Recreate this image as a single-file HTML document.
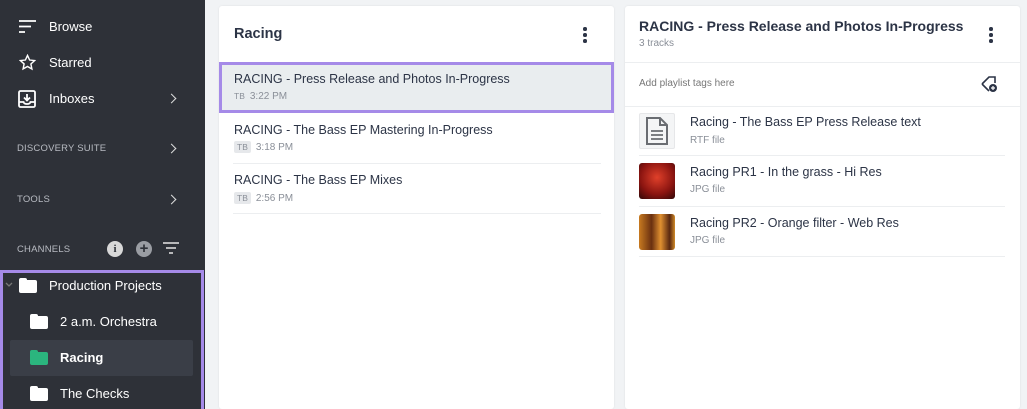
<!DOCTYPE html><html><head><style>
*{box-sizing:border-box;margin:0;padding:0}
body{width:1027px;height:409px;overflow:hidden;background:#f1f3f5;font-family:"Liberation Sans",sans-serif;position:relative}
.sb{position:absolute;left:0;top:0;width:205px;height:409px;background:#2e3138;color:#fff}
.a{position:absolute}
.nav{font-size:13px;color:#fff}
.sec{font-size:9.5px;color:#b8bbc2;letter-spacing:.2px}
.chev{position:absolute;width:7px;height:7px;border-top:1.6px solid #ddd;border-right:1.6px solid #ddd;transform:rotate(45deg)}
.panel{position:absolute;background:#fff;top:6px;height:403px;border-radius:3px;box-shadow:0 0 2px rgba(0,0,0,.08)}
.t{font-size:12.5px;color:#2c3446}
.s{font-size:10px;color:#8a8f98}
.tb{display:inline-block;background:#e6e8eb;color:#8a8f98;font-size:8.5px;padding:1px 3px;border-radius:2px;margin-right:5px}
.hr{position:absolute;height:1px;background:#eceef0}
.dots{position:absolute;width:3px}
.dots i{display:block;width:3.5px;height:3.5px;border-radius:50%;background:#2c3446;margin-bottom:2.5px}
.folder{position:absolute;width:18px;height:13px;background:#fff;border-radius:2px}
.folder:before{content:"";position:absolute;left:0;top:-2px;width:8px;height:4px;background:inherit;border-radius:2px 2px 0 0}
</style></head><body>
<div class="sb">
<svg class="a" style="left:19px;top:20px" width="18" height="14"><path d="M0 1h17M0 6.5h12M0 12h6" stroke="#fff" stroke-width="1.8"/></svg>
<div class="a nav" style="left:49px;top:19px">Browse</div>
<svg class="a" style="left:19px;top:54px" width="17" height="17" viewBox="0 0 24 24"><path d="M12 2l3 6.5 7 .8-5.2 4.8 1.4 7L12 17.6 5.8 21l1.4-7L2 9.3l7-.8z" fill="none" stroke="#fff" stroke-width="2"/></svg>
<div class="a nav" style="left:49px;top:55px">Starred</div>
<svg class="a" style="left:18px;top:90px" width="18" height="18"><rect x="1" y="1" width="16" height="16" rx="1.5" fill="none" stroke="#fff" stroke-width="1.8"/><path d="M9 4v6M6 7.5l3 3 3-3M1 12h4.5a3.5 2 0 0 0 7 0H17" fill="none" stroke="#fff" stroke-width="1.8"/></svg>
<div class="a nav" style="left:49px;top:91px">Inboxes</div>
<div class="chev" style="left:168px;top:95px"></div>
<div class="a sec" style="left:17px;top:143px">DISCOVERY SUITE</div>
<div class="chev" style="left:168px;top:145px"></div>
<div class="a sec" style="left:17px;top:194px">TOOLS</div>
<div class="chev" style="left:168px;top:196px"></div>
<div class="a sec" style="left:17px;top:244px">CHANNELS</div>
<div class="a" style="left:107px;top:241px;width:16px;height:16px;border-radius:50%;background:#d8d8d8;color:#2e3138;font:bold 11px 'Liberation Serif',serif;text-align:center;line-height:16px">i</div>
<div class="a" style="left:136px;top:241px;width:16px;height:16px;border-radius:50%;background:#9a9da3;color:#2e3138;font:bold 15px sans-serif;text-align:center;line-height:16px">+</div>
<svg class="a" style="left:163px;top:242px" width="16" height="13"><path d="M0 1h16M3 6h10M6 11h4" stroke="#ccc" stroke-width="1.8"/></svg>
<div class="a" style="left:0;top:270px;width:204px;height:139px;border:3px solid #a58ae8;border-bottom:none"></div>
<svg class="a" style="left:5px;top:282px" width="8" height="6"><path d="M1 1l3 3 3-3" fill="none" stroke="#777" stroke-width="1.3"/></svg>
<div class="folder" style="left:19px;top:280px"></div>
<div class="a nav" style="left:49px;top:278px">Production Projects</div>
<div class="folder" style="left:30px;top:316px"></div>
<div class="a nav" style="left:60px;top:314px">2 a.m. Orchestra</div>
<div class="a" style="left:10px;top:340px;width:183px;height:36px;background:#3a3e47;border-radius:2px"></div>
<div class="folder" style="left:30px;top:352px;background:#2bb57e"></div>
<div class="a nav" style="left:60px;top:350px;font-weight:bold">Racing</div>
<div class="folder" style="left:30px;top:388px"></div>
<div class="a nav" style="left:60px;top:386px">The Checks</div>
</div>

<div class="panel" style="left:219px;width:395px">
<div class="a" style="left:15px;top:20px;font-size:14.5px;font-weight:bold;color:#2c3446">Racing</div>
<div class="dots" style="left:364px;top:21px"><i></i><i></i><i></i></div>
<div class="a" style="left:0;top:56px;width:395px;height:51px;background:#e9edef;border:3px solid #a58ae8"></div>
<div class="a t" style="left:15px;top:66px">RACING - Press Release and Photos In-Progress</div>
<div class="a s" style="left:15px;top:85px"><span class="tb" style="background:none;padding:0">TB</span>3:22 PM</div>
<div class="a t" style="left:15px;top:117px">RACING - The Bass EP Mastering In-Progress</div>
<div class="a s" style="left:15px;top:135px"><span class="tb">TB</span>3:18 PM</div>
<div class="hr" style="left:14px;width:368px;top:157px"></div>
<div class="a t" style="left:15px;top:167px">RACING - The Bass EP Mixes</div>
<div class="a s" style="left:15px;top:186px"><span class="tb">TB</span>2:56 PM</div>
<div class="hr" style="left:14px;width:368px;top:207px"></div>
</div>

<div class="panel" style="left:625px;width:395px">
<div class="a" style="left:14px;top:12px;font-size:14px;font-weight:bold;color:#2c3446">RACING - Press Release and Photos In-Progress</div>
<div class="a s" style="left:14px;top:32px;font-size:10px">3 tracks</div>
<div class="dots" style="left:364px;top:21px"><i></i><i></i><i></i></div>
<div class="hr" style="left:0;width:395px;top:56px"></div>
<div class="a s" style="left:14px;top:72px;font-size:10px;color:#777">Add playlist tags here</div>
<svg class="a" style="left:356px;top:70px" width="17" height="17" viewBox="0 0 17 17"><path d="M1 8L8 1h6v6" fill="none" stroke="#2c3446" stroke-width="1.6"/><path d="M1 8l7 7" stroke="#2c3446" stroke-width="1.6"/><circle cx="12" cy="12" r="4" fill="#2c3446"/><path d="M12 10v4M10 12h4" stroke="#fff" stroke-width="1.2"/></svg>
<div class="hr" style="left:0;width:395px;top:100px"></div>
<div class="a" style="left:14px;top:107px;width:36px;height:36px;background:#f4f5f6;border:1px solid #e6e7e9;border-radius:2px"></div>
<svg class="a" style="left:20px;top:111px" width="24" height="28"><path d="M2 1h13l7 7v19H2z M15 1v7h7" fill="none" stroke="#6a6d72" stroke-width="2"/><path d="M6 14h12M6 18h12M6 22h12" stroke="#6a6d72" stroke-width="1.8"/></svg>
<div class="a t" style="left:65px;top:109px">Racing - The Bass EP Press Release text</div>
<div class="a s" style="left:65px;top:129px">RTF file</div>
<div class="hr" style="left:14px;width:366px;top:149px"></div>
<div class="a" style="left:14px;top:157px;width:36px;height:36px;border-radius:3px;background:radial-gradient(circle at 50% 40%,#e0402a,#8a1410 60%,#300808)"></div>
<div class="a t" style="left:65px;top:159px">Racing PR1 - In the grass - Hi Res</div>
<div class="a s" style="left:65px;top:178px">JPG file</div>
<div class="hr" style="left:14px;width:366px;top:200px"></div>
<div class="a" style="left:14px;top:208px;width:36px;height:36px;border-radius:3px;background:linear-gradient(90deg,#c87a20,#6a3010 35%,#e09030 60%,#5a2810 85%,#d08a28)"></div>
<div class="a t" style="left:65px;top:210px">Racing PR2 - Orange filter - Web Res</div>
<div class="a s" style="left:65px;top:229px">JPG file</div>
<div class="hr" style="left:14px;width:366px;top:250px"></div>
</div>
</body></html>
